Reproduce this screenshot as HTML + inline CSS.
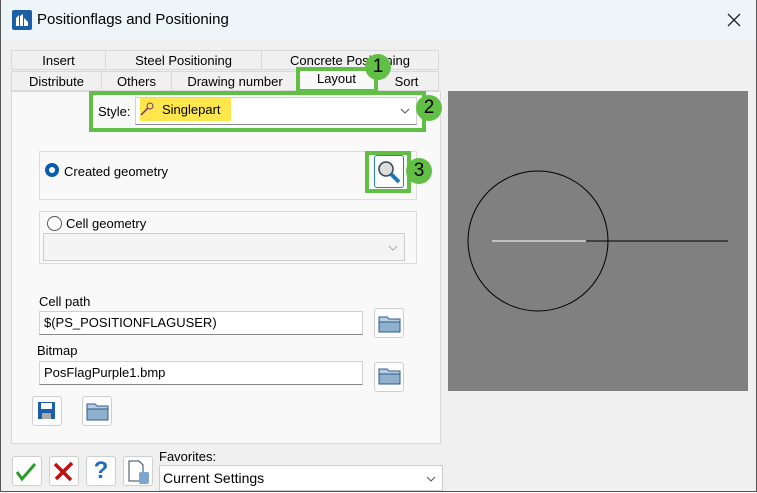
<!DOCTYPE html><html><head><style>
body{margin:0;width:757px;height:493px;overflow:hidden;font-family:"Liberation Sans",sans-serif;font-size:13px;color:#000;}
.win{position:absolute;left:0;top:0;width:755px;height:491px;background:#f0f0f0;border:1px solid #555;border-top:none;}
.title{position:absolute;left:0;top:0;width:755px;height:40px;background:#eef5f8;}
.a{position:absolute;}
.tab{position:absolute;height:20px;border:1px solid #d9d9d9;background:#f0f0f0;text-align:center;line-height:20px;box-sizing:border-box;font-size:13px;}
.inp{position:absolute;background:#fff;border:1px solid #d0d0d0;border-bottom:1px solid #888;box-sizing:border-box;padding-left:4px;line-height:22px;}
.btn{position:absolute;width:30px;height:30px;border:1px solid #cfcfcf;border-radius:3px;background:#fdfdfd;box-sizing:border-box;}
.grp{position:absolute;border:1px solid #dcdcdc;box-sizing:border-box;}
.g{position:absolute;border:4px solid #62bf46;box-sizing:border-box;}
.c{position:absolute;width:26px;height:26px;border-radius:50%;background:#62bf46;text-align:center;line-height:26px;font-size:19px;}
.chev{position:absolute;right:6px;}
</style></head><body>
<div class="win">
<div class="title"></div>
<svg class="a" style="left:11px;top:10px" width="20" height="20"><rect width="20" height="20" rx="2" fill="#1d5fa6"/><path d="M4 16V8l3-3v11M8 16V6l3-2v12M12 16V8l4 4v4z" fill="#fff"/></svg>
<div class="a" style="left:36px;top:11px;font-size:15px">Positionflags and Positioning</div>
<svg class="a" style="left:726px;top:13px" width="14" height="14"><path d="M1 1L13 13M13 1L1 13" stroke="#222" stroke-width="1.3"/></svg>
<div class="a" style="left:10px;top:91px;width:430px;height:353px;background:#f9f9f9;border:1px solid #d9d9d9;box-sizing:border-box"></div>
<div class="tab" style="left:10px;top:50px;width:95px">Insert</div>
<div class="tab" style="left:104px;top:50px;width:157px">Steel Positioning</div>
<div class="tab" style="left:260px;top:50px;width:178px">Concrete Positioning</div>
<div class="tab" style="left:10px;top:71px;width:91px">Distribute</div>
<div class="tab" style="left:100px;top:71px;width:71px">Others</div>
<div class="tab" style="left:170px;top:71px;width:128px">Drawing number</div>
<div class="tab" style="left:297px;top:68px;width:77px;height:24px;background:#f9f9f9;border-bottom:none">Layout</div>
<div class="tab" style="left:373px;top:71px;width:65px">Sort</div>
<div class="g" style="left:295px;top:67px;width:82px;height:26px"></div>
<div class="c" style="left:364px;top:54px">1</div>
<div class="a" style="left:97px;top:104px">Style:</div>
<div class="inp" style="left:134px;top:97px;width:282px;height:28px"><span style="background:#fde74c;padding:4px 10px 4px 22px;position:relative;top:1px">Singlepart</span><svg class="chev" style="top:9px" width="10" height="8"><path d="M1 2l4 4 4-4" fill="none" stroke="#555"/></svg></div>
<svg class="a" style="left:139px;top:102px" width="14" height="14"><circle cx="10" cy="4" r="3" fill="none" stroke="#7a2f7a"/><path d="M8 6L1 13" stroke="#7a2f7a" stroke-width="1.5"/></svg>
<div class="g" style="left:88px;top:91px;width:337px;height:41px"></div>
<div class="c" style="left:415px;top:95px">2</div>
<div class="grp" style="left:38px;top:151px;width:378px;height:49px"></div>
<div class="a" style="left:44px;top:163px;width:6px;height:6px;border-radius:50%;border:4px solid #0a5cb0;background:#fff"></div>
<div class="a" style="left:63px;top:164px">Created geometry</div>
<div class="btn" style="left:373px;top:155px;border-color:#2a7ad0;width:30px;height:33px"></div>
<svg class="a" style="left:374px;top:158px" width="30" height="30"><circle cx="11" cy="11" r="7" fill="#ddd" stroke="#345" stroke-width="1.5"/><path d="M16 16L24 24" stroke="#1a7ac0" stroke-width="4"/></svg>
<div class="g" style="left:364px;top:151px;width:46px;height:42px"></div>
<div class="c" style="left:405px;top:158px">3</div>
<div class="grp" style="left:38px;top:211px;width:378px;height:53px"></div>
<div class="a" style="left:46px;top:216px;width:13px;height:13px;border-radius:50%;border:1px solid #555;background:#fff"></div>
<div class="a" style="left:65px;top:216px">Cell geometry</div>
<div class="a" style="left:42px;top:233px;width:362px;height:28px;border:1px solid #ccc;background:#f4f4f4;box-sizing:border-box"><svg class="chev" style="top:10px" width="10" height="8"><path d="M1 2l4 4 4-4" fill="none" stroke="#aaa"/></svg></div>
<div class="a" style="left:38px;top:294px">Cell path</div>
<div class="inp" style="left:38px;top:311px;width:324px;height:24px">$(PS_POSITIONFLAGUSER)</div>
<div class="btn" style="left:373px;top:308px"></div>
<svg class="a" style="left:377px;top:314px" width="24" height="20"><path d="M1 3h8l2 2h11v13H1z" fill="#b8cde0" stroke="#2d5c8c"/><path d="M1 8h21v10H1z" fill="#8fb0cf" stroke="#2d5c8c"/></svg>
<div class="a" style="left:36px;top:343px">Bitmap</div>
<div class="inp" style="left:38px;top:361px;width:324px;height:24px">PosFlagPurple1.bmp</div>
<div class="btn" style="left:373px;top:362px"></div>
<svg class="a" style="left:377px;top:366px" width="24" height="20"><path d="M1 3h8l2 2h11v13H1z" fill="#b8cde0" stroke="#2d5c8c"/><path d="M1 8h21v10H1z" fill="#8fb0cf" stroke="#2d5c8c"/></svg>
<div class="btn" style="left:31px;top:396px"></div>
<svg class="a" style="left:36px;top:401px" width="20" height="20"><rect x="1" y="1" width="17" height="17" fill="#1c5fa8"/><rect x="4" y="2" width="11" height="6" fill="#fff"/><rect x="5" y="12" width="9" height="6" fill="#aaa"/></svg>
<div class="btn" style="left:81px;top:396px"></div>
<svg class="a" style="left:85px;top:400px" width="24" height="22"><path d="M1 4h8l2 2h11v14H1z" fill="#b8cde0" stroke="#2d5c8c"/><path d="M1 9h21v11H1z" fill="#8fb0cf" stroke="#2d5c8c"/></svg>
<div class="btn" style="left:11px;top:456px"></div>
<svg class="a" style="left:14px;top:460px" width="24" height="22"><path d="M2 12l5 7 13-15" fill="none" stroke="#2a9a2a" stroke-width="3"/></svg>
<div class="btn" style="left:48px;top:456px"></div>
<svg class="a" style="left:51px;top:460px" width="24" height="22"><path d="M3 4l16 16M20 3L4 19" stroke="#c01010" stroke-width="3.5"/></svg>
<div class="btn" style="left:85px;top:456px"></div>
<div class="a" style="left:85px;top:457px;width:30px;text-align:center;font-size:24px;font-weight:bold;color:#1f6fb8">?</div>
<div class="btn" style="left:122px;top:456px"></div>
<svg class="a" style="left:125px;top:459px" width="26" height="26"><path d="M3 2h10l4 4v16H3z" fill="#fff" stroke="#345"/><rect x="13" y="13" width="10" height="12" rx="2" fill="#7aa6d0"/></svg>
<div class="a" style="left:158px;top:449px">Favorites:</div>
<div class="a" style="left:158px;top:465px;width:284px;height:26px;background:#fff;border:1px solid #ccc;box-sizing:border-box;padding-left:3px;line-height:24px;font-size:14px">Current Settings<svg class="chev" style="top:9px" width="10" height="8"><path d="M1 2l4 4 4-4" fill="none" stroke="#555"/></svg></div>
<svg class="a" style="left:447px;top:91px" width="300" height="300"><rect width="300" height="300" fill="#808080"/><circle cx="90" cy="150" r="70" fill="none" stroke="#000"/><line x1="44" y1="150" x2="138" y2="150" stroke="#fff"/><line x1="138" y1="150" x2="280" y2="150" stroke="#000"/></svg>
</div>
</body></html>
